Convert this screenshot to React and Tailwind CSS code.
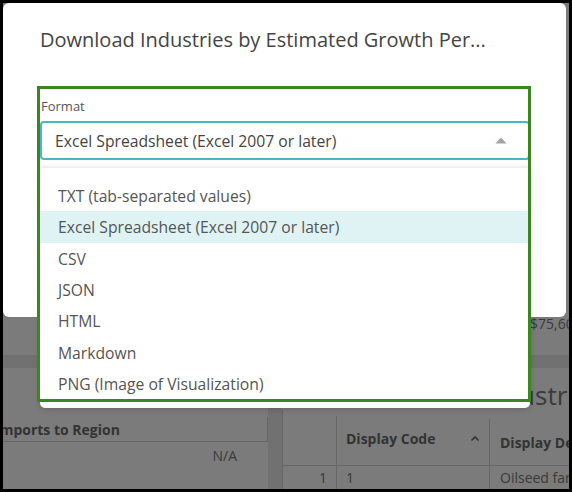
import React from "react";

const items = [
  "TXT (tab-separated values)",
  "Excel Spreadsheet (Excel 2007 or later)",
  "CSV",
  "JSON",
  "HTML",
  "Markdown",
  "PNG (Image of Visualization)",
];

export default function App() {
  return (
    <div
      className="w-[572px] h-[492px] bg-black p-[3px] overflow-hidden"
      style={{ fontFamily: '"Open Sans", "Noto Sans", sans-serif' }}
    >
      <div className="relative w-full h-full bg-[#7b7b7b] overflow-hidden flex flex-col">
        {/* background page */}
        <div className="h-[352px] shrink-0 flex flex-col justify-end pb-[21px]">
          <div className="pl-[527px] whitespace-nowrap text-[14px] leading-[20px] text-[#3a3a3a]">$75,600</div>
        </div>
        <div className="h-[13px] shrink-0 bg-[#717171]" />
        <div className="flex flex-1 min-h-0">
          <div className="w-[265px] shrink-0 flex flex-col">
            <div className="mt-[49px] h-[25px] border-b border-r border-[#666] flex items-center">
              <span className="ml-[-8px] whitespace-nowrap text-[14px] font-bold text-[#333]">Imports to Region</span>
            </div>
            <div className="h-[26px] flex items-center justify-end pr-[31px] text-[14px] text-[#3a3a3a]">N/A</div>
          </div>
          <div className="w-[14px] shrink-0 bg-[#717171]" />
          <div className="flex-1 min-w-0 flex flex-col overflow-hidden">
            <div className="h-[42px] shrink-0 flex items-center pt-[12px] pl-[198px] whitespace-nowrap text-[26px] text-[#3a3a3a]">
              Industries by Estimated Growth
            </div>
            <div className="flex-1 border-l border-[#666] flex flex-col">
              <div className="h-[56px] shrink-0 border-b border-[#666] flex items-end">
                <div className="w-[53px] shrink-0 h-[49px]" />
                <div className="w-[153px] shrink-0 h-[49px] border-l border-[#666] flex items-center pl-[9px] pr-[9px] justify-between">
                  <span className="text-[14px] font-bold text-[#333] whitespace-nowrap -translate-y-[2px]">Display Code</span>
                  <svg width="10" height="8" viewBox="0 0 10 8" className="-translate-y-[2px]">
                    <path d="M1.5 5.5 L5 2 L8.5 5.5" fill="none" stroke="#333" strokeWidth="1.6" />
                  </svg>
                </div>
                <div className="w-[200px] shrink-0 h-[46px] border-l border-[#666] flex items-center pl-[10px] whitespace-nowrap">
                  <span className="text-[14px] font-bold text-[#333]">Display Description</span>
                </div>
              </div>
              <div className="h-[23px] shrink-0 flex items-stretch text-[14px] text-[#3a3a3a]">
                <div className="w-[53px] shrink-0 flex items-center justify-end pr-[9px]">1</div>
                <div className="w-[153px] shrink-0 border-l border-[#666] flex items-center pl-[9px]">1</div>
                <div className="w-[200px] shrink-0 border-l border-[#666] flex items-center pl-[10px] whitespace-nowrap">Oilseed farming</div>
              </div>
            </div>
          </div>
        </div>

        {/* modal */}
        <div className="absolute left-0 top-0 w-[563px] h-[314px] bg-white rounded-[6px] z-10">
          <div className="pt-[23px] pl-[37px] text-[20px] leading-[28px] text-[#444] whitespace-nowrap">
            Download Industries by Estimated Growth Per...
          </div>
          <div className="mt-[43px] ml-[38px] text-[13px] leading-[18px] text-[#555]">Format</div>
          <div className="relative mt-[6px] ml-[37px] w-[490px]">
            <div className="h-[39px] border-2 border-[#4bb7c5] rounded-[4px] flex items-center justify-between pl-[13px] pr-[21px]">
              <span className="text-[15.7px] text-[#444] whitespace-nowrap translate-y-[1px]">Excel Spreadsheet (Excel 2007 or later)</span>
              <svg width="12" height="7" viewBox="0 0 12 7">
                <path d="M0.5 6.5 L6 0.5 L11.5 6.5 Z" fill="#a3a3a3" />
              </svg>
            </div>
            <div className="absolute left-0 top-[47px] w-full bg-white rounded-b-[5px] shadow-[0_-1px_4px_rgba(0,0,0,0.08),0_2px_6px_rgba(0,0,0,0.12)] pt-[12px] pb-[9px]">
              {items.map((t, i) => (
                <div
                  key={t}
                  className={
                    "h-[31.33px] flex items-center pl-[18px] text-[15.7px] text-[#555] whitespace-nowrap " +
                    (i === 1 ? "bg-[#dff3f5]" : "")
                  }
                >
                  <span className="translate-y-[1px]">{t}</span>
                </div>
              ))}
            </div>
          </div>
          {/* annotation outline */}
          <div className="absolute left-[34px] top-[83px] w-[494px] h-[316px] border-[3px] border-[#38871f] z-20 pointer-events-none" />
        </div>
      </div>
    </div>
  );
}
